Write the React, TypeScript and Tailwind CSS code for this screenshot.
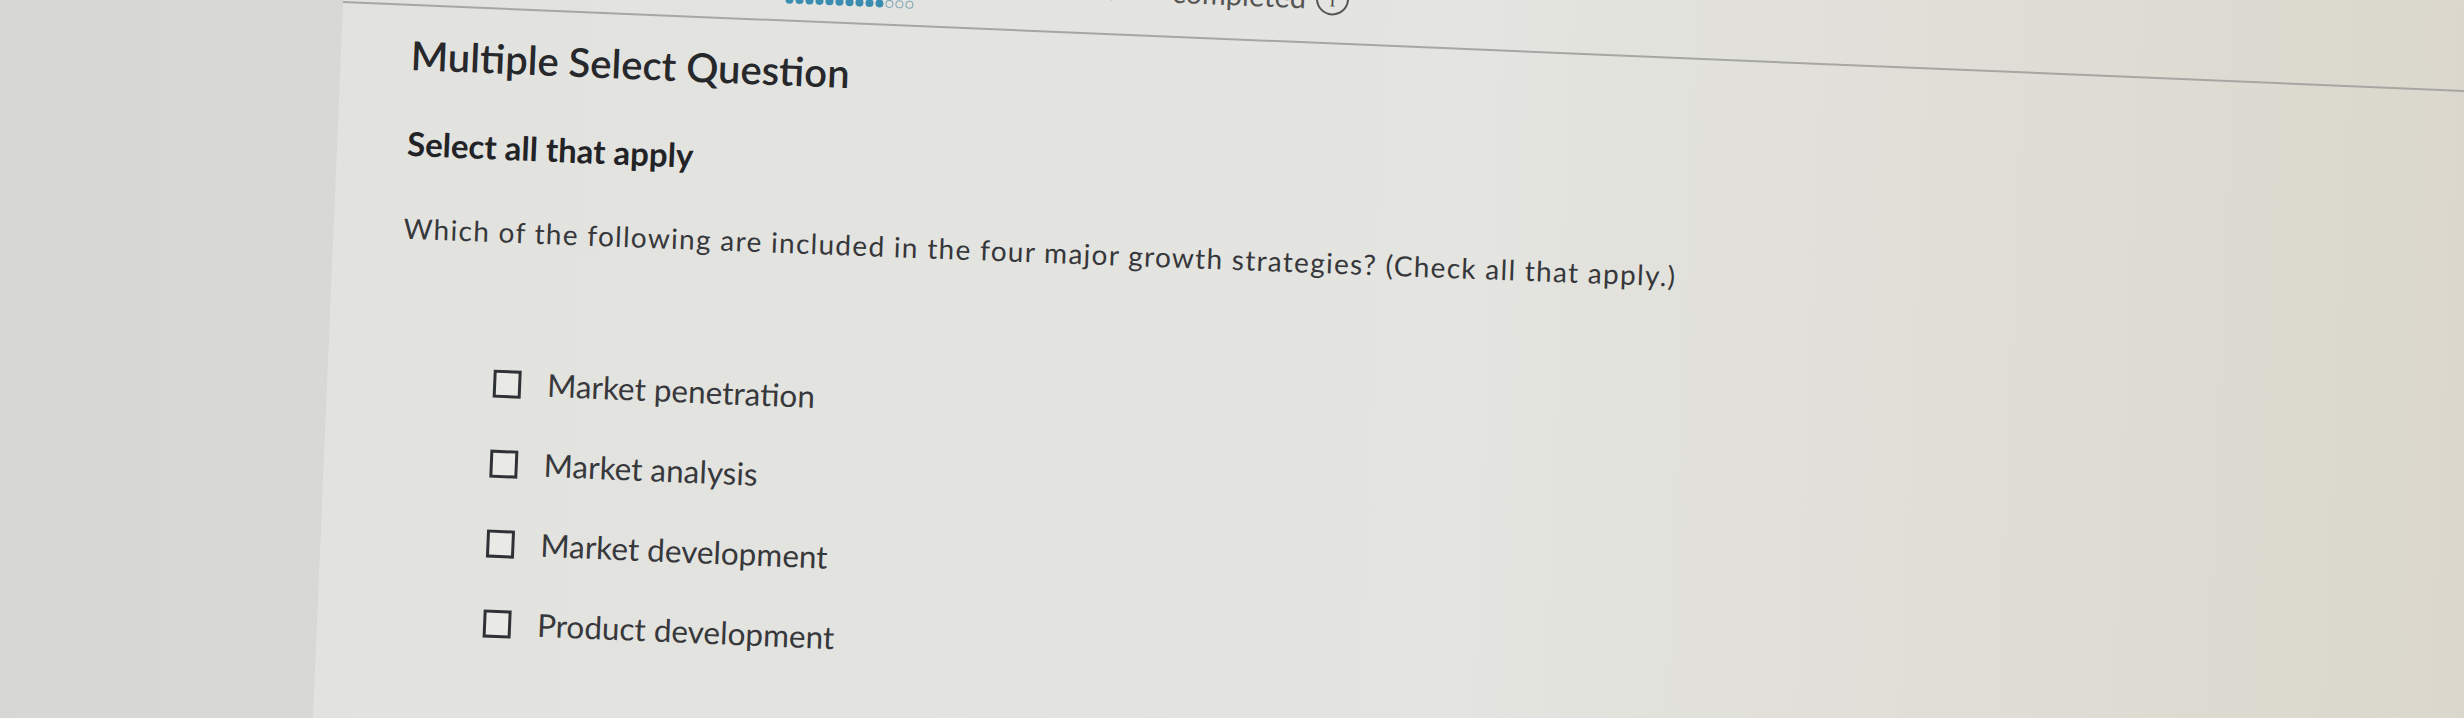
import React from "react";

const options = [
  "Market penetration",
  "Market analysis",
  "Market development",
  "Product development",
];

function Dots() {
  const filled = Array.from({ length: 10 });
  const hollow = Array.from({ length: 3 });
  return (
    <div className="flex items-center gap-[2px] mb-[16px]">
      {filled.map((_, i) => (
        <span key={"f" + i} className="w-[8px] h-[8px] rounded-full bg-[#3a8db0]" />
      ))}
      {hollow.map((_, i) => (
        <span key={"h" + i} className="w-[8px] h-[8px] rounded-full border-[1.5px] border-[#7fa6b6]" />
      ))}
    </div>
  );
}

export default function App() {
  return (
    <div className="w-[2464px] h-[718px] overflow-hidden flex bg-gradient-to-r from-[#d7d8d5] via-[#dadbd8] to-[#dedfdc] font-['Lato','Open_Sans',sans-serif]">
      <div className="shrink-0 ml-[343px] -mt-[97px] w-[2300px] h-[960px] rotate-[2.4deg] origin-[0px_100px] bg-gradient-to-r from-[#e2e2df] via-[#e4e4e0] to-[#d9d5c9]">
        {/* header */}
        <div className="h-[100px] border-b-2 border-[#a6a6a3] flex items-end pl-[442px]">
          <Dots />
          <span className="ml-[196px] mb-[33px] w-[2px] h-[10px] bg-[#666]" />
          <span className="ml-[60px] mb-[30px] text-[29px] leading-none text-[#555]">
            completed
          </span>
          <span className="ml-[10px] mb-[27px] w-[33px] h-[33px] rounded-full border-2 border-[#555] flex items-center justify-center text-[20px] leading-none text-[#444] font-['Liberation_Serif',serif]">
            i
          </span>
          <span className="ml-[1118px] mb-[36px] w-[18px] h-[20px] border-[3px] border-[#3b3f44] rounded-[3px]" />
        </div>

        {/* content */}
        <div className="pl-[70px] flex flex-col">
          <h1 className="mt-[29px] text-[40px] leading-none font-semibold text-[#26282b]">
            Multiple Select Question
          </h1>
          <h2 className="mt-[52px] text-[33px] leading-none font-bold text-[#222326]">
            Select all that apply
          </h2>
          <p className="mt-[54px] text-[28px] leading-none tracking-[1.3px] text-[#36373a] -rotate-[0.25deg] origin-left">
            Which of the following are included in the four major growth strategies? (Check all that apply.)
          </p>
          <div className="mt-[122px] ml-[96px] flex flex-col gap-[49px]">
            {options.map((o) => (
              <label key={o} className="flex items-center gap-[26px] h-[31px]">
                <span className="w-[28px] h-[28px] border-[3.5px] border-[#2e3136] bg-[#e9e9e6] shrink-0" />
                <span className="text-[31.5px] leading-none text-[#37383b]">{o}</span>
              </label>
            ))}
          </div>
        </div>
      </div>
    </div>
  );
}
